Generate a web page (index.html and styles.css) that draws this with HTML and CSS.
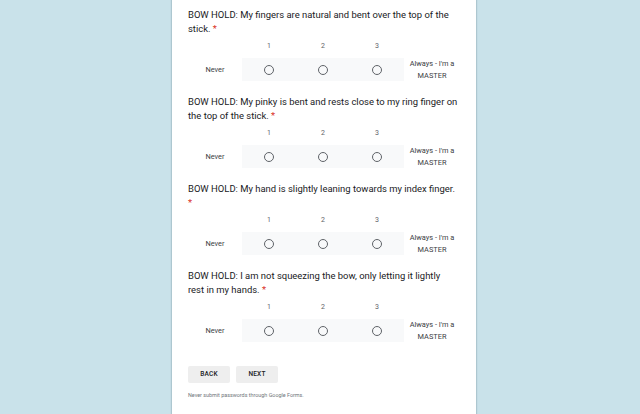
FILE: index.html
```html
<!DOCTYPE html>
<html>
<head>
<meta charset="utf-8">
<link rel="stylesheet" href="styles.css">
</head>
<body>
<div class="card">
  <div class="question">
    <div class="title">BOW HOLD: My fingers are natural and bent over the top of the stick. <span class="req">*</span></div>
    <div class="scale-head"><span></span><span>1</span><span>2</span><span>3</span><span></span></div>
    <div class="scale-row">
      <span class="lbl">Never</span>
      <div class="opts"><span class="cell"><i class="radio"></i></span><span class="cell"><i class="radio"></i></span><span class="cell"><i class="radio"></i></span></div>
      <span class="lbl">Always - I'm a MASTER</span>
    </div>
  </div>
  <div class="question">
    <div class="title">BOW HOLD: My pinky is bent and rests close to my ring finger on the top of the stick. <span class="req">*</span></div>
    <div class="scale-head"><span></span><span>1</span><span>2</span><span>3</span><span></span></div>
    <div class="scale-row">
      <span class="lbl">Never</span>
      <div class="opts"><span class="cell"><i class="radio"></i></span><span class="cell"><i class="radio"></i></span><span class="cell"><i class="radio"></i></span></div>
      <span class="lbl">Always - I'm a MASTER</span>
    </div>
  </div>
  <div class="question">
    <div class="title">BOW HOLD: My hand is slightly leaning towards my index finger.<br><span class="req">*</span></div>
    <div class="scale-head"><span></span><span>1</span><span>2</span><span>3</span><span></span></div>
    <div class="scale-row">
      <span class="lbl">Never</span>
      <div class="opts"><span class="cell"><i class="radio"></i></span><span class="cell"><i class="radio"></i></span><span class="cell"><i class="radio"></i></span></div>
      <span class="lbl">Always - I'm a MASTER</span>
    </div>
  </div>
  <div class="question">
    <div class="title">BOW HOLD: I am not squeezing the bow, only letting it lightly<br>rest in my hands. <span class="req">*</span></div>
    <div class="scale-head"><span></span><span>1</span><span>2</span><span>3</span><span></span></div>
    <div class="scale-row">
      <span class="lbl">Never</span>
      <div class="opts"><span class="cell"><i class="radio"></i></span><span class="cell"><i class="radio"></i></span><span class="cell"><i class="radio"></i></span></div>
      <span class="lbl">Always - I'm a MASTER</span>
    </div>
  </div>
  <div class="actions">
    <span class="btn">BACK</span>
    <span class="btn">NEXT</span>
  </div>
  <div class="footer">Never submit passwords through Google Forms.</div>
</div>
</body>
</html>
```
FILE: styles.css
```css
html, body {
  margin: 0;
  padding: 0;
  background: #c9e2ea;
  height: 100%;
  overflow: hidden;
}
body {
  font-family: Roboto, "Liberation Sans", sans-serif;
}
.card {
  box-sizing: border-box;
  width: 304px;
  min-height: 414px;
  margin-left: 172px;
  background: #ffffff;
  box-shadow: 0 0 1px 1px rgba(120, 150, 160, 0.35);
  padding: 8.25px 14px 0 16px;
}
.question {
  padding-bottom: 14.75px;
}
.title {
  font-size: 9.45px;
  line-height: 13.5px;
  color: #202124;
}
.req {
  color: #d93025;
}
.scale-head {
  display: grid;
  grid-template-columns: 54px 54px 54px 54px 54px;
  margin-top: 4.75px;
  height: 12px;
  line-height: 12px;
  font-size: 7px;
  color: #5f6368;
  text-align: center;
}
.scale-row {
  display: grid;
  grid-template-columns: 54px 162px 56px;
  margin-top: 5.5px;
  height: 23px;
  align-items: center;
}
.lbl {
  font-size: 7.4px;
  line-height: 12px;
  color: #3c4043;
  text-align: center;
}
.opts {
  display: grid;
  grid-template-columns: 54px 54px 54px;
  height: 23px;
  background: #f8f9fa;
}
.cell {
  display: flex;
  align-items: center;
  justify-content: center;
}
.radio {
  box-sizing: border-box;
  width: 10px;
  height: 10px;
  border: 1.3px solid #5f6368;
  border-radius: 50%;
}
.actions {
  display: flex;
  gap: 6px;
  margin-top: 10px;
}
.btn {
  width: 42px;
  height: 17px;
  line-height: 17px;
  background: #eeeeee;
  border-radius: 2px;
  text-align: center;
  font-size: 6.5px;
  font-weight: 500;
  color: #202124;
  letter-spacing: 0.2px;
}
.footer {
  margin-top: 9px;
  font-size: 5.4px;
  color: #70757a;
}
```
